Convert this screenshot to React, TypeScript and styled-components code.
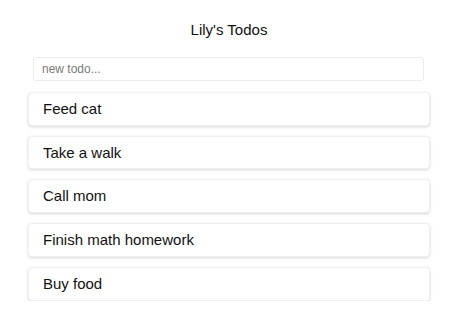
import React, { useState } from "react";
import styled, { createGlobalStyle } from "styled-components";

const GlobalStyle = createGlobalStyle`
  * {
    box-sizing: border-box;
  }
  body {
    margin: 0;
    background: #ffffff;
    font-family: "Liberation Sans", Arial, sans-serif;
    color: #111111;
  }
`;

const Page = styled.main`
  width: 402px;
  margin-left: 28px;
  padding-top: 21px;
  display: flex;
  flex-direction: column;
`;

const Title = styled.h1`
  margin: 0;
  font-size: 15px;
  font-weight: 400;
  line-height: 17px;
  text-align: center;
`;

const NewTodo = styled.input`
  margin: 19px 6px 11px 5px;
  height: 24px;
  padding: 0 8px;
  border: 1px solid #ececec;
  border-radius: 3px;
  font-family: inherit;
  font-size: 12px;
  color: #111111;
  outline: none;

  &::placeholder {
    color: #7a7a7a;
  }
`;

const TodoList = styled.ul`
  margin: 0;
  padding: 0;
  list-style: none;
  display: flex;
  flex-direction: column;
  gap: 10px;
`;

const TodoItem = styled.li`
  padding: 7px 14px;
  border: 1px solid #f0f0f0;
  border-radius: 4px;
  background: #ffffff;
  box-shadow: 0 1px 3px rgba(0, 0, 0, 0.16);
  font-size: 15px;
  line-height: 17.7px;
`;

const initialTodos = ["Feed cat", "Take a walk", "Call mom", "Finish math homework", "Buy food"];

export default function App() {
  const [todos, setTodos] = useState(initialTodos);
  const [draft, setDraft] = useState("");

  const addTodo = (e: React.KeyboardEvent<HTMLInputElement>) => {
    if (e.key === "Enter" && draft.trim()) {
      setTodos([...todos, draft.trim()]);
      setDraft("");
    }
  };

  return (
    <>
      <GlobalStyle />
      <Page>
        <Title>Lily's Todos</Title>
        <NewTodo
          placeholder="new todo..."
          value={draft}
          onChange={(e) => setDraft(e.target.value)}
          onKeyDown={addTodo}
        />
        <TodoList>
          {todos.map((todo, i) => (
            <TodoItem key={i}>{todo}</TodoItem>
          ))}
        </TodoList>
      </Page>
    </>
  );
}
